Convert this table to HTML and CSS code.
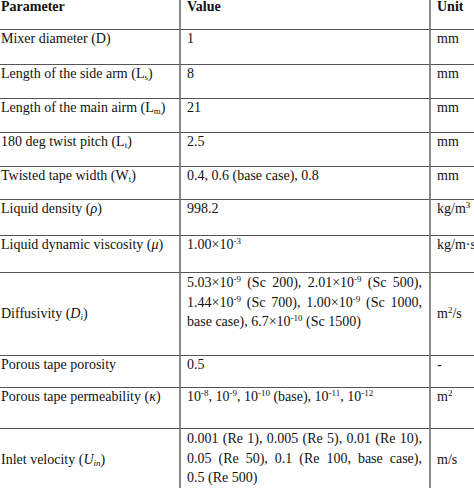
FILE: index.html
```html
<!DOCTYPE html>
<html>
<head>
<meta charset="utf-8">
<link rel="stylesheet" href="styles.css">
</head>
<body>
<table class="params">
  <colgroup><col class="c1"><col class="c2"><col class="c3"></colgroup>
  <thead>
    <tr class="hd"><th>Parameter</th><th>Value</th><th>Unit</th></tr>
  </thead>
  <tbody>
    <tr class="h35"><td>Mixer diameter (D)</td><td>1</td><td>mm</td></tr>
    <tr class="h34"><td>Length of the side arm (L<sub>s</sub>)</td><td>8</td><td>mm</td></tr>
    <tr class="h34"><td>Length of the main airm (L<sub>m</sub>)</td><td>21</td><td>mm</td></tr>
    <tr class="h34"><td>180 deg twist pitch (L<sub>t</sub>)</td><td>2.5</td><td>mm</td></tr>
    <tr class="h33"><td>Twisted tape width (W<sub>t</sub>)</td><td>0.4, 0.6 (base case), 0.8</td><td>mm</td></tr>
    <tr class="h36"><td>Liquid density (<i>ρ</i>)</td><td>998.2</td><td>kg/m<sup>3</sup></td></tr>
    <tr class="h37"><td>Liquid dynamic viscosity (<i>μ</i>)</td><td>1.00×10<sup>-3</sup></td><td>kg/m·s</td></tr>
    <tr class="h83 multi">
      <td>Diffusivity (<i>D<sub>i</sub></i>)</td>
      <td>
        <span class="ln jl">5.03×10<sup>-9</sup> (Sc 200), 2.01×10<sup>-9</sup> (Sc 500),</span>
        <span class="ln jl">1.44×10<sup>-9</sup> (Sc 700), 1.00×10<sup>-9</sup> (Sc 1000,</span>
        <span class="ln">base case), 6.7×10<sup>-10</sup> (Sc 1500)</span>
      </td>
      <td>m<sup>2</sup>/s</td>
    </tr>
    <tr class="h32"><td>Porous tape porosity</td><td>0.5</td><td>-</td></tr>
    <tr class="h41"><td>Porous tape permeability (<i>κ</i>)</td><td>10<sup>-8</sup>, 10<sup>-9</sup>, 10<sup>-10</sup> (base), 10<sup>-11</sup>, 10<sup>-12</sup></td><td>m<sup>2</sup></td></tr>
    <tr class="h62 multi">
      <td>Inlet velocity (<i>U<sub>in</sub></i>)</td>
      <td>
        <span class="ln jl">0.001 (Re 1), 0.005 (Re 5), 0.01 (Re 10),</span>
        <span class="ln jl">0.05 (Re 50), 0.1 (Re 100, base case),</span>
        <span class="ln">0.5 (Re 500)</span>
      </td>
      <td>m/s</td>
    </tr>
  </tbody>
</table>
</body>
</html>
```
FILE: styles.css
```css
html, body {
  margin: 0;
  padding: 0;
  background: #fff;
  overflow: hidden;
}
body {
  width: 474px;
  height: 488px;
}
.params {
  margin-top: -2px;
  border-collapse: separate;
  border-spacing: 0;
  table-layout: fixed;
  width: 490px;
  font-family: "Liberation Serif", "Times New Roman", serif;
  font-size: 14px;
  line-height: 18px;
  color: #111;
}
.c1 { width: 179px; }
.c2 { width: 250px; }
.c3 { width: 61px; }
.params th,
.params td {
  vertical-align: top;
  text-align: left;
  padding: 0 7px 0 6px;
  font-weight: normal;
}
.params th {
  font-weight: bold;
}
.params th:first-child,
.params td:first-child {
  padding-left: 1px;
  padding-right: 2px;
}
.params th + th,
.params td + td {
  border-left: 2px solid #8a8a8a;
}
.params tbody td {
  border-top: 1px solid #555;
}
.params td:nth-child(2) {
  text-align: justify;
}
.multi td:first-child,
.multi td:last-child {
  vertical-align: middle;
}
.ln {
  display: block;
  line-height: 19.5px;
}
.jl { text-align-last: justify; }
sub, sup {
  font-size: 64%;
  line-height: 0;
}
sub { vertical-align: -0.25em; }
sup { vertical-align: 0.55em; }
.hd { height: 31px; }
.h32 { height: 32px; }
.h33 { height: 33px; }
.h34 { height: 34px; }
.h35 { height: 35px; }
.h36 { height: 36px; }
.h37 { height: 37px; }
.h41 { height: 41px; }
.h62 { height: 62px; }
.h83 { height: 83px; }
```
